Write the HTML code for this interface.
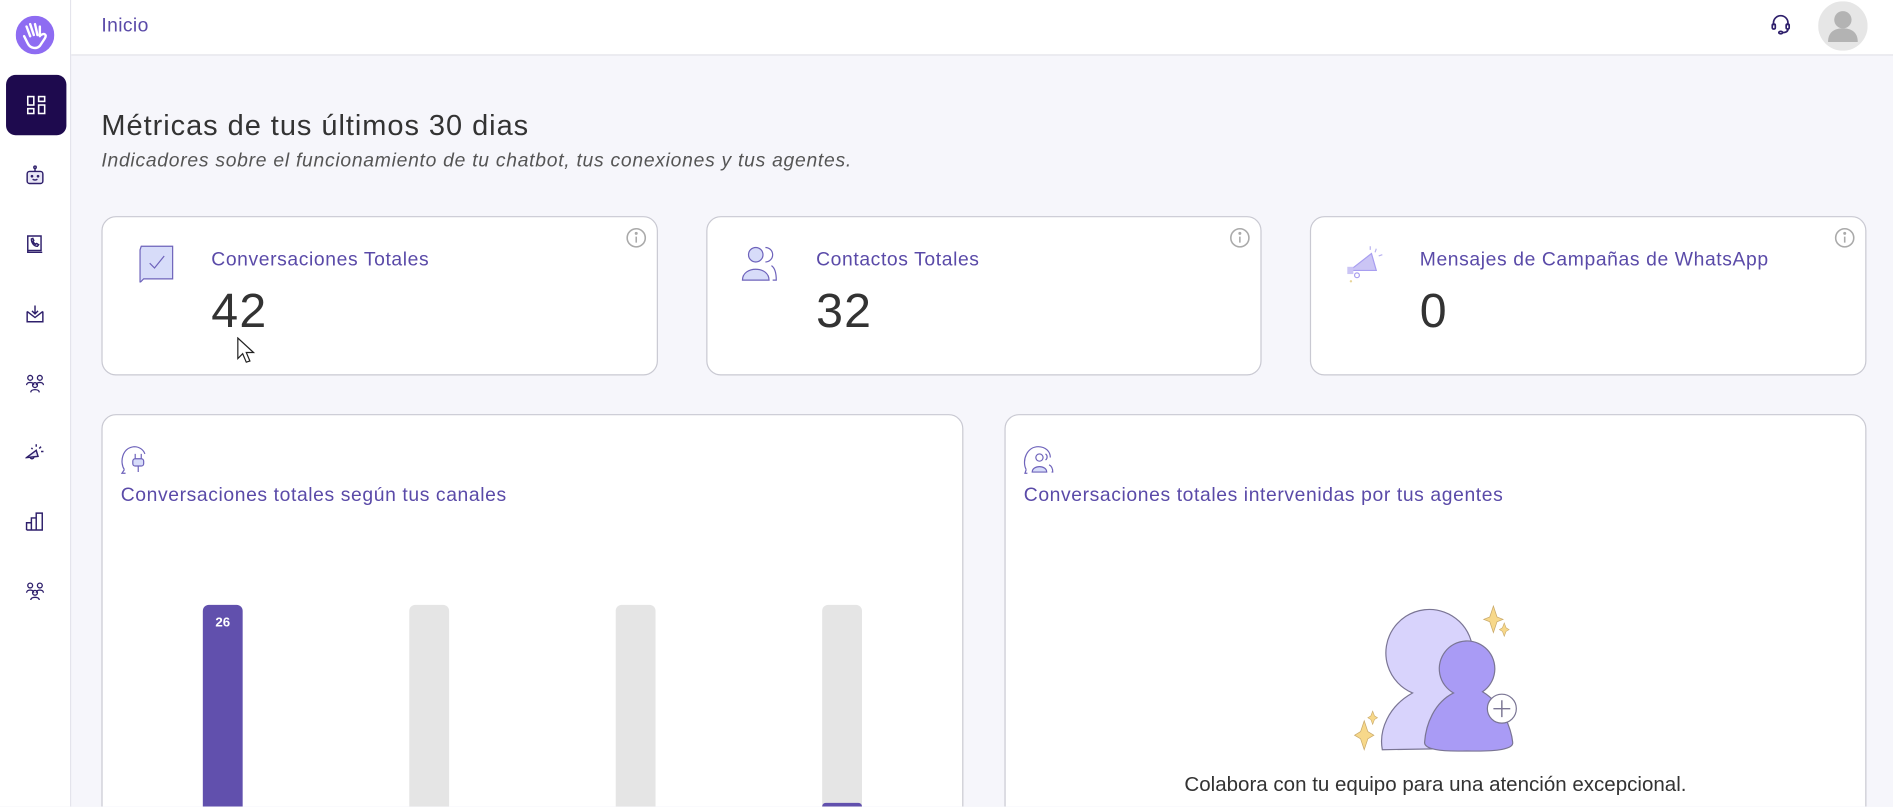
<!DOCTYPE html>
<html><head><meta charset="utf-8"><style>
*{box-sizing:border-box;margin:0;padding:0}
html,body{width:1893px;height:807px;overflow:hidden;background:#f6f6fb;font-family:"Liberation Sans",sans-serif}
#w{position:absolute;left:0;top:0;width:1568px;height:668px;overflow:hidden;transform:scale(1.20727);transform-origin:0 0;background:#f6f6fb}
.a{position:absolute}
.side{left:0;top:0;width:59px;height:668px;background:#fff;border-right:1px solid #e4e4ec}
.head{left:59px;top:0;width:1509px;height:46px;background:#fff;border-bottom:1px solid #e2e2e8}
.nav{left:21px;width:16px;height:16px}
.card{background:#fff;border:1px solid #c9c9d2;border-radius:12px}
.ct{font-size:16px;letter-spacing:.5px;color:#5a4aa8}
.num{font-size:40px;color:#333;letter-spacing:1px}
.bar{width:33px;background:#e5e5e5;border-radius:5px 5px 0 0;top:501px;height:167px}
</style></head><body><div id="w">
<div class="a side"></div>
<div class="a head"></div>
<svg class="a" style="left:13px;top:13px" width="32" height="32" viewBox="0 0 32 32"><circle cx="16" cy="16" r="16" fill="#8e6cf2"/><path d="M9 9l3 8M12 7l3 9M16 7l2 9M20 9l0 8M21 16c3-2 5 0 3 3l-4 6c-3 3-8 2-10-2l-3-6" fill="none" stroke="#fff" stroke-width="2" stroke-linecap="round"/></svg>
<div class="a" style="left:5px;top:62px;width:50px;height:50px;background:#1e0a4e;border-radius:8px"></div>
<svg class="a" style="left:22px;top:79px" width="16" height="16" viewBox="0 0 16 16" fill="none" stroke="#fff" stroke-width="1.3"><rect x="1" y="1" width="5" height="7"/><rect x="10" y="1" width="5" height="4"/><rect x="1" y="11" width="5" height="4"/><rect x="10" y="8" width="5" height="7"/></svg>
<svg class="a nav" style="top:137px" viewBox="0 0 16 16" fill="none" stroke="#2e1f6b" stroke-width="1.2"><rect x="1.5" y="5" width="13" height="10" rx="2" fill="#e8e6f5"/><path d="M8 5V2"/><circle cx="8" cy="1.5" r="1"/><circle cx="5.5" cy="9" r=".5" fill="#2e1f6b"/><circle cx="10.5" cy="9" r=".5" fill="#2e1f6b"/><path d="M6 11.5q2 1.2 4 0"/></svg>
<svg class="a nav" style="top:194px" viewBox="0 0 16 16" fill="none" stroke="#2e1f6b" stroke-width="1.2"><path d="M2 1.5h11v12H2zM2 13.5v1.5h12"/><path d="M5 4c0 3 2 6 5 6l1-1.3-1.6-1-1 .6C7.2 7.5 6.6 6.7 6.3 6l.7-.8-.8-1.7z"/></svg>
<svg class="a nav" style="top:252px" viewBox="0 0 16 16" fill="none" stroke="#2e1f6b" stroke-width="1.2"><path d="M1.5 6v8.5h13V6M1.5 6l6.5 5 6.5-5M8 1v7M5.5 5.5L8 8l2.5-2.5"/></svg>
<svg class="a nav" style="top:310px" viewBox="0 0 16 16" fill="none" stroke="#2e1f6b" stroke-width="1.1"><circle cx="4" cy="3" r="2"/><circle cx="12" cy="3" r="2"/><circle cx="8" cy="9" r="2"/><path d="M1 9c0-3 6-3 6 0M9 9c0-3 6-3 6 0M4.5 15c0-3 7-3 7 0"/></svg>
<svg class="a nav" style="top:367px" viewBox="0 0 16 16" fill="none" stroke="#2e1f6b" stroke-width="1.2"><path d="M1 12l8-6 1.5 5z" fill="#e8e6f5"/><path d="M4 11.5a1.5 1.5 0 0 0 3 0M9 1v2M13 3l-1.5 1.5M15 7h-2M5 4l1 1"/></svg>
<svg class="a nav" style="top:424px" viewBox="0 0 16 16" fill="none" stroke="#2e1f6b" stroke-width="1.2"><path d="M1 15V9h4v6M5 15V5h4v10M9 15V1h5v14H1"/></svg>
<svg class="a nav" style="top:482px" viewBox="0 0 16 16" fill="none" stroke="#2e1f6b" stroke-width="1.1"><circle cx="4" cy="3" r="2"/><circle cx="12" cy="3" r="2"/><circle cx="8" cy="9" r="2"/><path d="M1 9c0-3 6-3 6 0M9 9c0-3 6-3 6 0M4.5 15c0-3 7-3 7 0"/></svg>
<div class="a" style="left:84px;top:13px;font-size:16px;letter-spacing:.3px;color:#5a4aa8">Inicio</div>
<svg class="a" style="left:1466px;top:11px" width="18" height="20" viewBox="0 0 18 20" fill="none" stroke="#2e1f6b" stroke-width="1.4"><path d="M3 10V8a6 6 0 0 1 12 0v2"/><rect x="2" y="9" width="2.5" height="4" rx="1"/><rect x="13.5" y="9" width="2.5" height="4" rx="1"/><path d="M15 13c0 2-2 3-5 3"/><ellipse cx="9" cy="16" rx="1.6" ry="1"/></svg>
<svg class="a" style="left:1506px;top:1px" width="41" height="41" viewBox="0 0 40 40"><circle cx="20" cy="20" r="20" fill="#e6e6e6"/><circle cx="20" cy="15" r="7" fill="#b3b3b3"/><path d="M8 33c0-8 5-11 12-11s12 3 12 11z" fill="#b3b3b3"/></svg>
<div class="a" style="left:84px;top:91px;font-size:24px;letter-spacing:.8px;color:#333">Métricas de tus últimos 30 dias</div>
<div class="a" style="left:84px;top:125px;font-size:16px;letter-spacing:.6px;color:#555;font-style:italic">Indicadores sobre el funcionamiento de tu chatbot, tus conexiones y tus agentes.</div>

<div class="a card" style="left:84px;top:179px;width:461px;height:132px"></div>
<div class="a card" style="left:585px;top:179px;width:460px;height:132px"></div>
<div class="a card" style="left:1085px;top:179px;width:461px;height:132px"></div>
<svg class="a" style="left:114px;top:202px" width="32" height="32" viewBox="0 0 32 32" fill="none"><path d="M3 2h26v27H5l-3 3V5z" fill="#d7dcf9" stroke="#6e63bb" stroke-width="1"/><path d="M10 16l4 4 8-10" stroke="#6e63bb" stroke-width="1"/></svg>
<svg class="a" style="left:614px;top:202px" width="32" height="32" viewBox="0 0 32 32" fill="none" stroke="#6e63bb" stroke-width="1"><circle cx="12" cy="9" r="6" fill="#d7dcf9"/><path d="M1 30c0-12 22-12 22 0z" fill="#d7dcf9"/><path d="M20 3a6 6 0 0 1 0 12M25 18c3 2 4 6 4 12h-3"/></svg>
<svg class="a" style="left:1114px;top:202px" width="34" height="34" viewBox="0 0 34 34" fill="none"><path d="M4 22L22 8l4 14z" fill="#cbc5f5" stroke="#a89ef0"/><rect x="2" y="19" width="5" height="6" fill="#cbc5f5"/><circle cx="10" cy="26" r="2" stroke="#a89ef0"/><path d="M26 4l-1 3M31 9l-3 1M21 2v3" stroke="#b9b2f0"/><circle cx="5" cy="31" r="1" fill="#e8d59a"/></svg>
<div class="a ct" style="left:175px;top:207px">Conversaciones Totales</div>
<div class="a ct" style="left:676px;top:207px">Contactos Totales</div>
<div class="a ct" style="left:1176px;top:207px">Mensajes de Campañas de WhatsApp</div>
<div class="a num" style="left:175px;top:236px">42</div>
<div class="a num" style="left:676px;top:236px">32</div>
<div class="a num" style="left:1176px;top:236px">0</div>
<svg class="a" style="left:518px;top:188px" width="18" height="18" viewBox="0 0 18 18" fill="none" stroke="#aaa" stroke-width="1.3"><circle cx="9" cy="9" r="7.5"/><path d="M9 8v5"/><circle cx="9" cy="5.3" r=".6" fill="#aaa"/></svg>
<svg class="a" style="left:1018px;top:188px" width="18" height="18" viewBox="0 0 18 18" fill="none" stroke="#aaa" stroke-width="1.3"><circle cx="9" cy="9" r="7.5"/><path d="M9 8v5"/><circle cx="9" cy="5.3" r=".6" fill="#aaa"/></svg>
<svg class="a" style="left:1519px;top:188px" width="18" height="18" viewBox="0 0 18 18" fill="none" stroke="#aaa" stroke-width="1.3"><circle cx="9" cy="9" r="7.5"/><path d="M9 8v5"/><circle cx="9" cy="5.3" r=".6" fill="#aaa"/></svg>
<svg class="a" style="left:196px;top:279px" width="18" height="24" viewBox="0 0 18 24"><path d="M1 1v17l4-4 3 7 3-1-3-7h6z" fill="#fff" stroke="#222" stroke-width="1"/></svg>

<div class="a card" style="left:84px;top:343px;width:714px;height:340px"></div>
<div class="a card" style="left:832px;top:343px;width:714px;height:340px"></div>
<svg class="a" style="left:99px;top:367px" width="26" height="26" viewBox="0 0 26 26" fill="none" stroke="#6e63bb" stroke-width="1"><path d="M4 22C0 16 2 4 12 3c5 0 8 3 9 6"/><path d="M4 22l-2 3h3"/><rect x="11" y="13" width="9" height="6" rx="2" fill="#d7dcf9"/><path d="M13 13v-4M18 13v-4M15.5 19v5"/></svg>
<svg class="a" style="left:847px;top:367px" width="28" height="26" viewBox="0 0 28 26" fill="none" stroke="#6e63bb" stroke-width="1"><path d="M3 22C-1 14 4 3 13 3c6 0 10 4 10 9"/><path d="M3 22l-1 3h2"/><circle cx="14" cy="12" r="3"/><path d="M8 24c0-6 12-6 12 0z" fill="#d7dcf9"/><path d="M19 9a3 3 0 0 1 0 5M22 18c2 1 3 3 3 6h-1"/></svg>
<div class="a ct" style="left:100px;top:402px">Conversaciones totales según tus canales</div>
<div class="a ct" style="left:848px;top:402px">Conversaciones totales intervenidas por tus agentes</div>
<div class="a bar" style="left:168px;background:#6150ad"></div>
<div class="a" style="left:168px;top:510px;width:33px;text-align:center;font-size:11px;font-weight:bold;color:#fff">26</div>
<div class="a bar" style="left:339px"></div>
<div class="a bar" style="left:510px"></div>
<div class="a bar" style="left:681px"></div>
<div class="a" style="left:681px;top:665px;width:33px;height:3px;background:#6150ad;border-radius:3px 3px 0 0"></div>
<svg class="a" style="left:1115px;top:495px" width="150" height="135" viewBox="1115 495 150 135">
<path d="M1170 574A36 36 0 1 1 1205 570L1205 620L1145 621C1142 605 1150 585 1170 574Z" fill="#d8d3fc" stroke="#7a7594" stroke-width="1"/>
<path d="M1204 574A23 23 0 1 1 1228 573C1245 583 1252 605 1253 615Q1254 623 1215 622Q1180 623 1180 615C1181 600 1188 582 1204 574Z" fill="#a99bf5" stroke="#7a7594" stroke-width="1"/>
<circle cx="1244" cy="587" r="12" fill="#fff" stroke="#7a7594" stroke-width="1"/>
<path d="M1244 580v14M1237 587h14" stroke="#7a7594" stroke-width="1.2"/>
<path d="M1237 502l3 9 5 2-5 2-3 9-3-9-5-2 5-2z" fill="#f7d88a" stroke="#c9a96a" stroke-width=".6"/>
<path d="M1246 516l1.5 4 2.5 1.5-2.5 1.5-1.5 4-1.5-4-2.5-1.5 2.5-1.5z" fill="#f7d88a" stroke="#c9a96a" stroke-width=".5"/>
<path d="M1130 597l3 9 5 3-5 3-3 9-3-9-5-3 5-3z" fill="#f7d88a" stroke="#c9a96a" stroke-width=".6"/>
<path d="M1137 589l1.5 4 2.5 1.5-2.5 1.5-1.5 4-1.5-4-2.5-1.5 2.5-1.5z" fill="#f7d88a" stroke="#c9a96a" stroke-width=".5"/>
</svg>
<div class="a" style="left:832px;top:640px;width:714px;text-align:center;font-size:17px;color:#333">Colabora con tu equipo para una atención excepcional.</div>
</div></body></html>
